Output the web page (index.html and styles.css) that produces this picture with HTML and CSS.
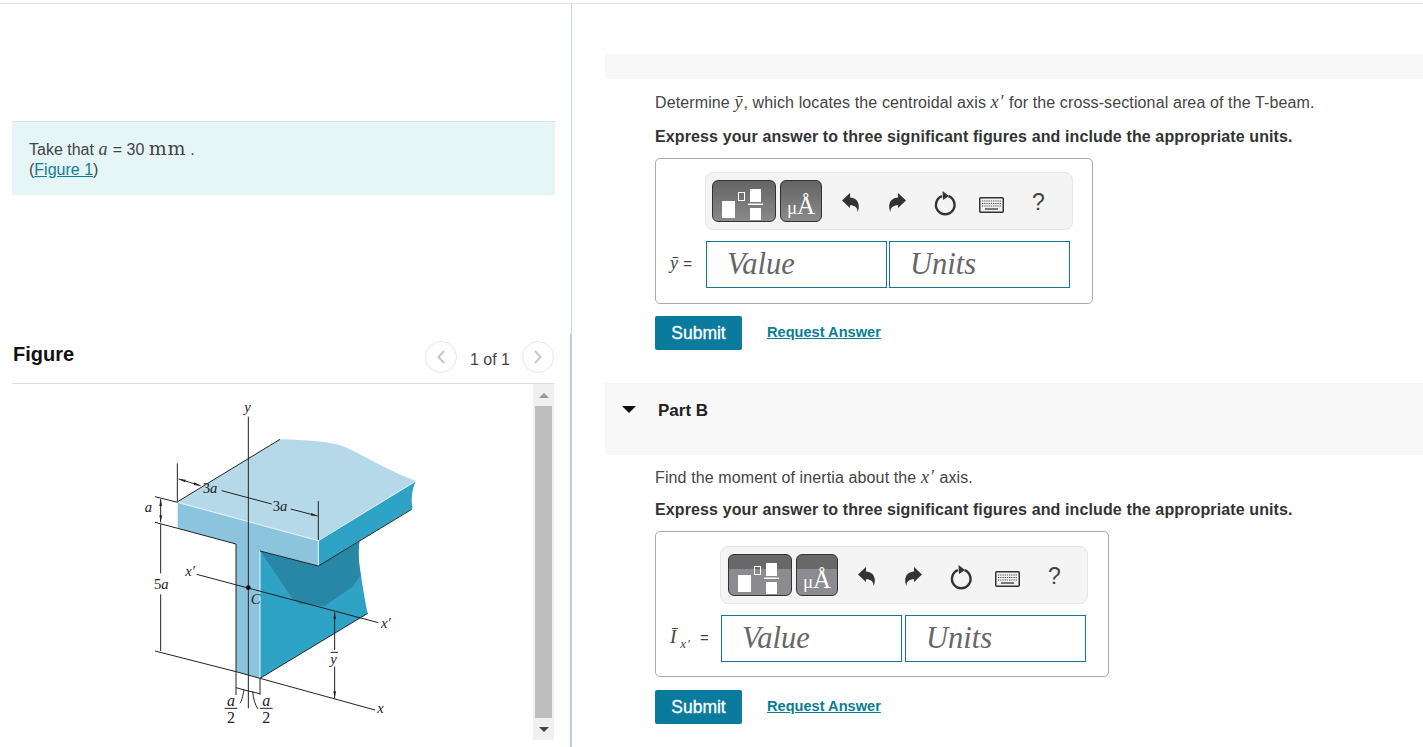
FILE: index.html
```html
<!DOCTYPE html>
<html lang="en">
<head>
<meta charset="utf-8">
<title>Part B</title>
<link rel="stylesheet" href="styles.css">
</head>
<body>
<svg class="defs" width="0" height="0" aria-hidden="true">
  <defs>
    <symbol id="i-tpl" viewBox="0 0 63 42">
      <rect x="10" y="21" width="13" height="17" fill="#fff"/>
      <rect x="26.500" y="12.500" width="6" height="8" fill="none" stroke="#fff"/>
      <rect x="38" y="9" width="11" height="13" fill="#fff"/>
      <rect x="36" y="23.500" width="15" height="1.500" fill="#fff"/>
      <rect x="38" y="28" width="11" height="12" fill="#fff"/>
    </symbol>
    <symbol id="i-undo" viewBox="0 0 17 19">
      <path d="M0 7.500 8 0v4.500c5 0 9 3.500 8.800 9.500-.1 2-.6 3.600-1.300 5 .2-4.500-2.500-6.800-7.500-6.800V15z" fill="#333"/>
    </symbol>
    <symbol id="i-redo" viewBox="0 0 17 19">
      <path d="M17 7.500 9 0v4.500C4 4.500 0 8 .2 14c.1 2 .6 3.600 1.300 5-.2-4.500 2.500-6.800 7.500-6.800V15z" fill="#333"/>
    </symbol>
    <symbol id="i-reset" viewBox="0 0 24 26">
      <path d="M9 6.200a9.300 9.300 0 1 0 6.500 0" fill="none" stroke="#333" stroke-width="2.400"/>
      <path d="M9.500 1l6.500 5-6 4z" fill="#333"/>
    </symbol>
    <symbol id="i-keys" viewBox="0 0 25 16">
      <rect x="0.750" y="0.750" width="23.500" height="14.500" rx="1" fill="#f1f1f1" stroke="#333" stroke-width="1.500"/>
      <path d="M3 4h19M3 6.500h19M3 9h19" stroke="#555" stroke-width="1.200" stroke-dasharray="1.300 .9" fill="none"/>
      <path d="M6 12h13" stroke="#444" stroke-width="1.400" fill="none"/>
    </symbol>
  </defs>
</svg>
<div class="page">
  <aside class="left">
    <div class="intro">
      <div class="info">
        <div>Take that <i class="m">a</i> = 30 <span class="mu">mm</span> .</div>
        <div>(<a href="#" class="flink">Figure 1</a>)</div>
      </div>
    </div>
    <section class="figure">
      <header class="fig-head">
        <h2 class="fig-title">Figure</h2>
        <div class="fig-nav">
          <span class="circle"><svg width="10" height="16" viewBox="0 0 10 16"><path d="M8 2 2.500 8 8 14" fill="none" stroke="#c8c8c8" stroke-width="2"/></svg></span>
          <span class="count">1 of 1</span>
          <span class="circle"><svg width="10" height="16" viewBox="0 0 10 16"><path d="M2 2 7.500 8 2 14" fill="none" stroke="#c8c8c8" stroke-width="2"/></svg></span>
        </div>
      </header>
      <div class="fig-body">
        <svg class="beam" width="300" height="352" viewBox="0 0 900 1056" role="img" aria-label="T-beam">
          <defs>
            <marker id="ah" markerUnits="userSpaceOnUse" markerWidth="22" markerHeight="12" refX="21" refY="6" orient="auto-start-reverse"><path d="M0 2 21 6 0 10z" fill="#222"/></marker>
          </defs>
          <path d="M143 320 450 133C530 135 600 138 650 158 710 185 770 225 858 258L565 435z" fill="#b6d9e9"/>
          <path d="M143 320 565 435V513L390 468V850L318 830V447L143 400z" fill="#8dc4dd"/>
          <path d="M565 435 858 258C845 285 842 315 848 340L565 513z" fill="#2fa3c5"/>
          <path d="M390 468 565 513 688 440C683 480 688 510 692 535 698 575 705 620 713 655L390 850z" fill="#2fa3c5"/>
          <path d="M392 470 565 513 688 440C683 480 688 510 692 540L668 575 585 632 510 628 488 612z" fill="#2886a7"/>
          <path d="M143 322 565 437M565 437V513M858 258 565 437M390 468V850" fill="none" stroke="#eaf6fb" stroke-width="3"/>
          <g fill="none" stroke="#222" stroke-width="3">
            <path d="M143 320 450 133M143 400 318 447V830M390 468 565 513 845 343M390 850 713 655"/>
            <path d="M355 65V940M142 205V320M565 318V435M75 305 143 322M75 382 143 400M75 768 318 830 390 850 735 945M200 538 745 683"/>
            <path d="M92 312V382" marker-start="url(#ah)" marker-end="url(#ah)"/>
            <path d="M92 388V535M92 598V768" />
            <path d="M146 252 212 272" marker-start="url(#ah)" marker-end="url(#ah)"/>
            <path d="M275 287 425 327M482 342 563 363" marker-end="url(#ah)"/>
            <path d="M614 652V765" marker-start="url(#ah)"/>
            <path d="M614 815V910" marker-end="url(#ah)"/>
            <path d="M318 830V900M390 850V900M318 878 355 888M355 888 390 896M342 885C338 905 335 918 330 925M368 890C370 910 375 930 384 942"/>
            <path d="M284 940H322M390 940H428"/>
          </g>
          <circle cx="355" cy="578" r="7" fill="#111"/>
          <g class="lbl">
            <text x="343" y="52">y</text>
            <text x="44" y="352">a</text>
            <text x="72" y="582" class="up">5<tspan class="it">a</tspan></text>
            <text x="218" y="294" class="up">3<tspan class="it">a</tspan></text>
            <text x="428" y="349" class="up">3<tspan class="it">a</tspan></text>
            <text x="166" y="544">x′</text>
            <text x="362" y="626">C</text>
            <text x="753" y="698">x′</text>
            <text x="601" y="807">y</text>
            <text x="742" y="955">x</text>
            <text x="291" y="934" class="fr">a</text>
            <text x="291" y="984" class="fr up">2</text>
            <text x="397" y="934" class="fr">a</text>
            <text x="397" y="984" class="fr up">2</text>
          </g>
          <path d="M602 772H624" stroke="#222" stroke-width="3"/>
        </svg>
        <div class="scrollbar">
          <div class="sb-btn"><span class="tri-up"></span></div>
          <div class="sb-thumb"></div>
          <div class="sb-btn"><span class="tri-down"></span></div>
        </div>
      </div>
    </section>
  </aside>
  <main class="right">
    <div class="band-a"></div>
    <div class="content c-a">
      <p class="q">Determine <i class="m">ȳ</i>, which locates the centroidal axis <i class="m">x′</i> for the cross-sectional area of the T-beam.</p>
      <p class="req">Express your answer to three significant figures and include the appropriate units.</p>
      <div class="box box-a">
        <div class="toolbar">
          <span class="btn btn-w btn-grad"><svg width="63" height="42"><use href="#i-tpl"/></svg></span>
          <span class="btn btn-n btn-grad"><span class="ua"><span class="mic">μ</span>Å</span></span>
          <span class="tool tool-first"><svg width="17" height="19"><use href="#i-undo"/></svg></span>
          <span class="tool"><svg width="17" height="19"><use href="#i-redo"/></svg></span>
          <span class="tool"><svg width="24" height="26"><use href="#i-reset"/></svg></span>
          <span class="tool"><svg class="kb" width="25" height="16"><use href="#i-keys"/></svg></span>
          <span class="tool help">?</span>
        </div>
        <div class="inputs">
          <label class="lab lab-a"><i class="m">ȳ</i> =</label>
          <div class="field">Value</div>
          <div class="field">Units</div>
        </div>
      </div>
      <div class="actions"><button class="submit">Submit</button><a href="#" class="ask">Request Answer</a></div>
    </div>
    <div class="band-b"><span class="caret"></span><h3 class="part">Part B</h3></div>
    <div class="content c-b">
      <p class="q">Find the moment of inertia about the <i class="m">x′</i> axis.</p>
      <p class="req">Express your answer to three significant figures and include the appropriate units.</p>
      <div class="box box-b">
        <div class="toolbar">
          <span class="btn btn-w btn-split"><svg width="63" height="42"><use href="#i-tpl"/></svg></span>
          <span class="btn btn-n btn-split"><span class="ua"><span class="mic">μ</span>Å</span></span>
          <span class="tool tool-first"><svg width="17" height="19"><use href="#i-undo"/></svg></span>
          <span class="tool"><svg width="17" height="19"><use href="#i-redo"/></svg></span>
          <span class="tool"><svg width="24" height="26"><use href="#i-reset"/></svg></span>
          <span class="tool"><svg class="kb" width="25" height="16"><use href="#i-keys"/></svg></span>
          <span class="tool help">?</span>
        </div>
        <div class="inputs inputs-b">
          <label class="lab lab-b"><i class="m big">Ī</i><sub class="m sb">x′</sub> =</label>
          <div class="field">Value</div>
          <div class="field">Units</div>
        </div>
      </div>
      <div class="actions"><button class="submit">Submit</button><a href="#" class="ask">Request Answer</a></div>
    </div>
  </main>
</div>
</body>
</html>
```
FILE: styles.css
```css
* { box-sizing: border-box; }
html, body { margin: 0; height: 100%; overflow: hidden; background: #fff; }
body { padding-top: 3px; font-family: "Liberation Sans", Arial, sans-serif; font-size: 16px; color: #333; }
.defs { position: absolute; }
.page { display: flex; height: 744px; border-top: 1px solid #e4e4e4; overflow: hidden; }

.left { width: 572px; flex: none; display: flex; flex-direction: column; }
.intro { height: 330px; padding: 117px 0 0 12px; border-right: 1px solid #c8d8e3; }
.info { width: 543px; height: 74px; padding: 18px 16px 0 17px; background: #e6f5f6; border-top: 1px solid #d6e3e6; line-height: 20px; color: #444; }
.m { font-family: "Liberation Serif", serif; font-style: italic; font-size: 18px; line-height: 0; letter-spacing: 1px; }
.mu { font-family: "DejaVu Serif", "Liberation Serif", serif; font-size: 19px; letter-spacing: .5px; line-height: 0; }
.flink { color: #107f93; }

.figure { flex: 1; padding-left: 12px; border-right: 2px solid #bcd0df; overflow: hidden; }
.fig-head { width: 542px; height: 50px; border-bottom: 1px solid #ddd; display: flex; justify-content: space-between; padding-left: 1px; }
.fig-title { margin: 8px 0 0; font-size: 20px; line-height: 24px; color: #111; font-weight: bold; }
.fig-nav { display: flex; align-items: flex-start; margin-top: 7px; }
.circle { width: 32px; height: 32px; border: 1px solid #e8e8e8; border-radius: 50%; display: flex; align-items: center; justify-content: center; }
.count { margin: 6px 12px 0 13px; line-height: 26px; color: #444; }
.fig-body { width: 542px; display: flex; height: 357px; }
.beam { margin: 11px 0 0 118px; flex: none; }
.scrollbar { margin-left: auto; width: 21px; height: 356px; background: #f0f0f0; padding: 0 2px; display: flex; flex-direction: column; }
.sb-thumb { height: 312px; background: #bdbdbd; }
.sb-btn { flex: 1; display: flex; align-items: center; justify-content: center; }
.tri-up { border: 5px solid transparent; border-top: 0; border-bottom: 5px solid #999; }
.tri-down { border: 5px solid transparent; border-bottom: 0; border-top: 5px solid #444; }
.lbl text { font-family: "Liberation Serif", serif; font-style: italic; font-size: 44px; fill: #222; }
.lbl text.fr { font-size: 48px; }
.lbl text.up { font-style: normal; }
.lbl .it { font-style: italic; }

.right { flex: 1; padding: 50px 0 0 33px; }
.band-a { height: 25px; background: #f8f8f8; }
.content { padding-left: 50px; }
.q { margin: 14px 0 0; line-height: 20px; color: #444; letter-spacing: .12px; }
.req { margin: 14px 0 0; line-height: 20px; font-weight: bold; color: #333; letter-spacing: .12px; }
.c-b .q { margin-top: 13px; }
.c-b .req { margin-top: 12px; }

.box { margin-top: 11px; border: 1px solid #aaa; border-radius: 5px; padding-top: 13px; }
.box-a { width: 438px; height: 146px; padding-left: 50px; }
.box-b { width: 454px; height: 146px; padding-top: 14px; padding-left: 65px; }
.toolbar { width: 368px; height: 58px; margin-left: -1px; background: #f4f4f4; border: 1px solid #e6e6e6; border-radius: 8px; display: flex; align-items: center; padding-left: 6px; }
.box-b .toolbar { padding-left: 7px; }
.btn { height: 42px; border: 1px solid #333; border-radius: 6px; display: block; flex: none; position: relative; overflow: hidden; }
.btn svg { display: block; margin: -1px; }
.btn-w { width: 64px; margin-right: 4px; }
.btn-n { width: 42px; text-align: center; }
.btn-grad { background: linear-gradient(#646464, #8a8a8a); }
.btn-split { background: linear-gradient(#686868 14px, #8b8b90 14px); }
.ua { display: block; margin-top: 10px; font-family: "Liberation Serif", serif; font-size: 25px; line-height: 30px; color: #fff; white-space: nowrap; }
.mic { font-size: 19px; }
.tool { width: 47px; flex: none; display: flex; align-items: center; justify-content: center; padding-top: 3px; }
.tool-first { margin-left: 5px; }
.kb { margin-top: 4px; }
.help { font-size: 23px; color: #444; padding-top: 3px; }
.inputs { display: flex; gap: 2px; margin-top: 11px; position: relative; }
.inputs-b { gap: 3px; }
.lab { position: absolute; top: 14px; white-space: nowrap; color: #444; font-size: 15px; }
.lab-a { left: -36px; }
.lab-b { left: -51px; }
.big { font-size: 19px; }
.sb { font-size: 13px; margin: 0 5px 0 3px; vertical-align: -5px; line-height: 0; }
.field { width: 181px; height: 47px; border: 1px solid #16788e; padding-left: 20px; font-family: "Liberation Serif", serif; font-style: italic; font-size: 30.500px; line-height: 44px; color: #666; background: #fff; }

.actions { display: flex; align-items: center; margin-top: 12px; }
.c-b .actions { margin-top: 13px; }
.submit { width: 87px; height: 34px; padding: 0; border: 0; border-radius: 2px; background: #0b7b9d; color: #fff; font-family: inherit; font-size: 17.500px; font-weight: normal; -webkit-text-stroke: .3px #fff; }
.ask { margin: 0 0 2px 25px; color: #0a7c94; font-size: 14.600px; font-weight: bold; }

.band-b { margin-top: 33px; height: 72px; background: #f8f8f8; display: flex; align-items: flex-start; padding: 18px 0 0 17px; }
.caret { margin-top: 5px; border: 7px solid transparent; border-bottom: 0; border-top: 7px solid #111; }
.part { margin: 0 0 0 22px; font-size: 17px; line-height: 20px; color: #222; font-weight: bold; }
```
